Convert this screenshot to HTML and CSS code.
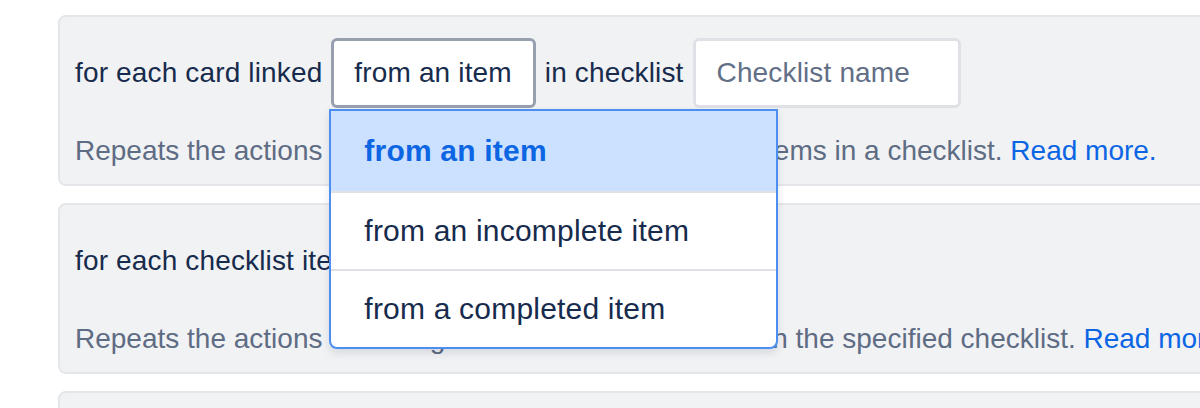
FILE: index.html
```html
<!DOCTYPE html>
<html lang="en">
<head>
<meta charset="utf-8">
<title>Checklist loops</title>
<link rel="stylesheet" href="styles.css">
</head>
<body>
<div class="list">
  <div class="card">
    <div class="row">
      <span class="label">for each card linked</span>
      <div class="select-wrap">
        <div class="select">from an item</div>
        <ul class="dropdown">
          <li class="option selected">from an item</li>
          <li class="option">from an incomplete item</li>
          <li class="option">from a completed item</li>
        </ul>
      </div>
      <span class="label">in checklist</span>
      <div class="input"><span class="placeholder">Checklist name</span></div>
    </div>
    <p class="desc">Repeats the actions for each card linked from all of the items in a checklist. <a class="link" href="#">Read more.</a></p>
  </div>
  <div class="card">
    <div class="row">
      <span class="label">for each checklist item</span>
    </div>
    <p class="desc">Repeats the actions for a single checklist item at a time in the specified checklist. <a class="link" href="#">Read more.</a></p>
  </div>
  <div class="card"></div>
</div>
</body>
</html>
```
FILE: styles.css
```css
html, body {
  margin: 0;
  padding: 0;
  background: #ffffff;
  overflow: hidden;
}
body {
  font-family: "Liberation Sans", Arial, sans-serif;
  font-size: 28px;
  letter-spacing: 0.15px;
  color: #172b4d;
  width: 1200px;
  height: 408px;
}
.list {
  display: flex;
  flex-direction: column;
  gap: 17px;
  padding: 15px 0 0 58px;
}
.card {
  box-sizing: border-box;
  width: 1300px;
  height: 171px;
  flex-shrink: 0;
  background: #f1f2f4;
  border: 2px solid #e4e6ea;
  border-radius: 8px;
  padding: 21px 16px 0 15px;
}
.row {
  display: flex;
  align-items: center;
  height: 70px;
  gap: 9px;
  white-space: nowrap;
}
.label {
  line-height: 32px;
}
.select-wrap {
  position: relative;
}
.select {
  box-sizing: border-box;
  height: 70px;
  display: flex;
  align-items: center;
  padding: 0 21px 0 20px;
  background: #ffffff;
  border: 3px solid #97a0af;
  border-radius: 6px;
  color: #172b4d;
}
.input {
  box-sizing: border-box;
  width: 268px;
  height: 70px;
  display: flex;
  align-items: center;
  padding: 0 21px;
  background: #ffffff;
  border: 3px solid #dfe1e6;
  border-radius: 6px;
}
.placeholder {
  color: #626f86;
}
.dropdown {
  position: absolute;
  top: 71px;
  left: -2px;
  z-index: 10;
  box-sizing: border-box;
  width: 449px;
  height: 240px;
  margin: 0;
  padding: 0;
  list-style: none;
  background: #ffffff;
  border: 2px solid #4c8ff0;
  border-radius: 0 0 8px 8px;
  box-shadow: 0 4px 8px rgba(9, 30, 66, 0.12);
  overflow: hidden;
  font-size: 30px;
  letter-spacing: 0.2px;
}
.option {
  box-sizing: border-box;
  height: 78px;
  display: flex;
  align-items: center;
  padding: 0 33px;
  color: #172b4d;
  border-top: 2px solid #dfe1e6;
}
.option:first-child {
  border-top: 0;
  height: 80px;
}
.option.selected {
  background: #cce0ff;
  color: #0c66e4;
  font-weight: bold;
}
.desc {
  margin: 27px 0 0 0;
  line-height: 32px;
  color: #5e6c84;
  letter-spacing: 0;
  white-space: nowrap;
}
.link {
  color: #0c66e4;
  text-decoration: none;
}
```
